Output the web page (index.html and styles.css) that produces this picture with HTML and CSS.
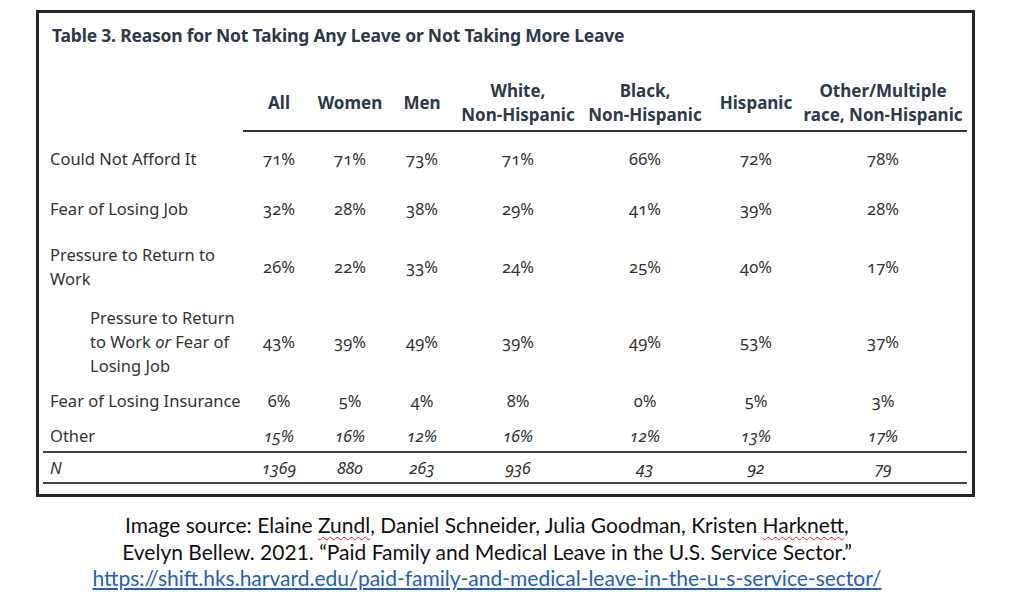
FILE: index.html
```html
<!DOCTYPE html>
<html>
<head>
<meta charset="utf-8">
<link rel="stylesheet" href="styles.css">
</head>
<body>
<div class="page">
  <div class="box">
    <h1 class="title">Table 3. Reason for Not Taking Any Leave or Not Taking More Leave</h1>
    <table class="data">
      <colgroup>
        <col class="c-lab"><col class="c-all"><col class="c-women"><col class="c-men"><col class="c-white"><col class="c-black"><col class="c-hisp"><col class="c-other">
      </colgroup>
      <thead>
        <tr class="head">
          <th class="lab"></th>
          <th class="one">All</th>
          <th class="one">Women</th>
          <th class="one">Men</th>
          <th>White,<br>Non-Hispanic</th>
          <th>Black,<br>Non-Hispanic</th>
          <th class="one">Hispanic</th>
          <th>Other/Multiple<br>race, Non-Hispanic</th>
        </tr>
      </thead>
      <tbody>
        <tr class="r1">
          <td class="lab">Could Not Afford It</td>
          <td>71%</td><td>71%</td><td>73%</td><td>71%</td><td>66%</td><td>72%</td><td>78%</td>
        </tr>
        <tr class="r2">
          <td class="lab">Fear of Losing Job</td>
          <td>32%</td><td>28%</td><td>38%</td><td>29%</td><td>41%</td><td>39%</td><td>28%</td>
        </tr>
        <tr class="r3">
          <td class="lab">Pressure to Return to<br>Work</td>
          <td>26%</td><td>22%</td><td>33%</td><td>24%</td><td>25%</td><td>40%</td><td>17%</td>
        </tr>
        <tr class="r4">
          <td class="lab sub">Pressure to Return<br>to Work <em>or</em> Fear of<br>Losing Job</td>
          <td>43%</td><td>39%</td><td>49%</td><td>39%</td><td>49%</td><td>53%</td><td>37%</td>
        </tr>
        <tr class="r5">
          <td class="lab">Fear of Losing Insurance</td>
          <td>6%</td><td>5%</td><td>4%</td><td>8%</td><td>0%</td><td>5%</td><td>3%</td>
        </tr>
        <tr class="r6 it">
          <td class="lab up">Other</td>
          <td>15%</td><td>16%</td><td>12%</td><td>16%</td><td>12%</td><td>13%</td><td>17%</td>
        </tr>
        <tr class="rn it">
          <td class="lab">N</td>
          <td>1369</td><td>880</td><td>263</td><td>936</td><td>43</td><td>92</td><td>79</td>
        </tr>
      </tbody>
    </table>
  </div>
  <div class="caption">
    <p class="cap-line">Image source: Elaine <span class="spell">Zundl</span>, Daniel Schneider, Julia Goodman, Kristen <span class="spell">Harknett</span>,</p>
    <p class="cap-line">Evelyn Bellew. 2021. “Paid Family and Medical Leave in the U.S. Service Sector.”</p>
    <p class="cap-line"><a class="link" href="#">https://shift.hks.harvard.edu/paid-family-and-medical-leave-in-the-u-s-service-sector/</a></p>
  </div>
</div>
</body>
</html>
```

FILE: styles.css
```css
* { box-sizing: border-box; }
html, body { margin: 0; padding: 0; background: #fff; }
body { font-family: "Noto Sans", "Open Sans", sans-serif; }

.page {
  padding-top: 10px;
  width: 1024px;
}

.box {
  margin-left: 36px;
  width: 939px;
  border: 3px solid #262626;
  padding: 10px 5px 10px 4px;
  background: #fff;
}

.title {
  margin: 0 0 0 9px;
  font-size: 17.5px;
  line-height: 24px;
  font-weight: 700;
  color: #2c3a4b;
  letter-spacing: -0.2px;
}

.data {
  width: 924px;
  table-layout: fixed;
  border-collapse: separate;
  border-spacing: 0;
  font-size: 16.5px;
  color: #333;
  font-variant-numeric: oldstyle-nums;
}

.c-lab { width: 200px; }
.c-all { width: 72px; }
.c-women { width: 70px; }
.c-men { width: 74px; }
.c-white { width: 118px; }
.c-black { width: 136px; }
.c-hisp { width: 86px; }
.c-other { width: 168px; }

.data th {
  height: 85px;
  vertical-align: bottom;
  padding: 0 0 3px 0;
  font-size: 17px;
  font-weight: 700;
  color: #2c3a4b;
  line-height: 24px;
  text-align: center;
  white-space: nowrap;
  border-bottom: 2px solid #333;
}
.data th.one { padding-bottom: 15px; }
.data th.lab { border-bottom: none; }

.data td {
  padding: 0;
  text-align: center;
  vertical-align: middle;
  line-height: 24px;
}
.data td.lab {
  text-align: left;
  padding-left: 7px;
}
.data td.sub { padding-left: 47px; }

.r1 td { height: 54px; }
.r2 td { height: 46px; }
.r3 td { height: 70px; }
.r4 td { height: 80px; }
.r5 td { height: 38px; }
.r6 td { height: 31px; }
.rn td {
  height: 33px;
  border-top: 2px solid #444;
  border-bottom: 2px solid #444;
}

.it td { font-style: italic; }
.it td.up { font-style: normal; }

.caption {
  margin-top: 15px;
  width: 974px;
  text-align: center;
  font-family: "Lato", "Open Sans", sans-serif;
  font-size: 21px;
  color: #111;
}
.cap-line {
  margin: 0;
  line-height: 26.5px;
}
.spell {
  text-decoration: underline wavy #d92020;
  text-decoration-thickness: 1px;
  text-underline-offset: 3px;
  text-decoration-skip-ink: none;
}
.link {
  color: #1d5ec9;
  text-decoration: underline;
  text-underline-offset: 2px;
}
```
